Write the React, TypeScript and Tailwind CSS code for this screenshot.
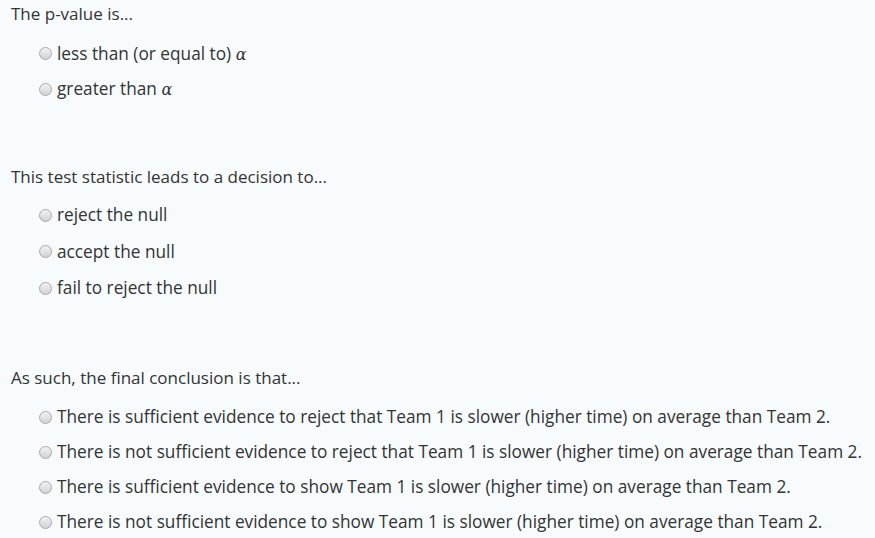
const questions = [
  {
    prompt: 'The p-value is...',
    rowH: 'h-[35.5px]',
    options: [
      ['less than (or equal to) ', true],
      ['greater than ', true],
    ],
  },
  {
    prompt: 'This test statistic leads to a decision to...',
    rowH: 'h-[36.5px]',
    options: [
      ['reject the null', false],
      ['accept the null', false],
      ['fail to reject the null', false],
    ],
  },
  {
    prompt: 'As such, the final conclusion is that...',
    rowH: 'h-[35px]',
    options: [
      ['There is sufficient evidence to reject that Team 1 is slower (higher time) on average than Team 2.', false],
      ['There is not sufficient evidence to reject that Team 1 is slower (higher time) on average than Team 2.', false],
      ['There is sufficient evidence to show Team 1 is slower (higher time) on average than Team 2.', false],
      ['There is not sufficient evidence to show Team 1 is slower (higher time) on average than Team 2.', false],
    ],
  },
] as const;

const Radio = () => (
  <span className="inline-block h-[13px] w-[13px] shrink-0 rounded-full border border-[#a8a8a8] bg-[linear-gradient(#f2f2f2,#d2d2d2)]" />
);

export default function App() {
  return (
    <div className="min-h-[538px] w-[875px] bg-[#f7fbfe] pl-[11px] pt-[3px] text-[17px] text-[#333] [font-family:'Open_Sans',sans-serif]">
      {questions.map((q, qi) => (
        <div key={qi} className={qi === 0 ? '' : qi === 1 ? 'mt-[59px]' : 'mt-[60px]'}>
          <div className="h-[22px] leading-[22px]">{q.prompt}</div>
          <ul className={qi === 1 ? 'mt-[9px] pl-[28px]' : 'mt-[11px] pl-[28px]'}>
            {q.options.map(([label, alpha], oi) => (
              <li key={oi} className={`flex ${q.rowH} items-center gap-[5px] text-[17.25px]`}>
                <Radio />
                <span>
                  {label}
                  {alpha && <span className="italic [font-family:'DejaVu_Serif',serif] text-[16px]">α</span>}
                </span>
              </li>
            ))}
          </ul>
        </div>
      ))}
    </div>
  );
}
